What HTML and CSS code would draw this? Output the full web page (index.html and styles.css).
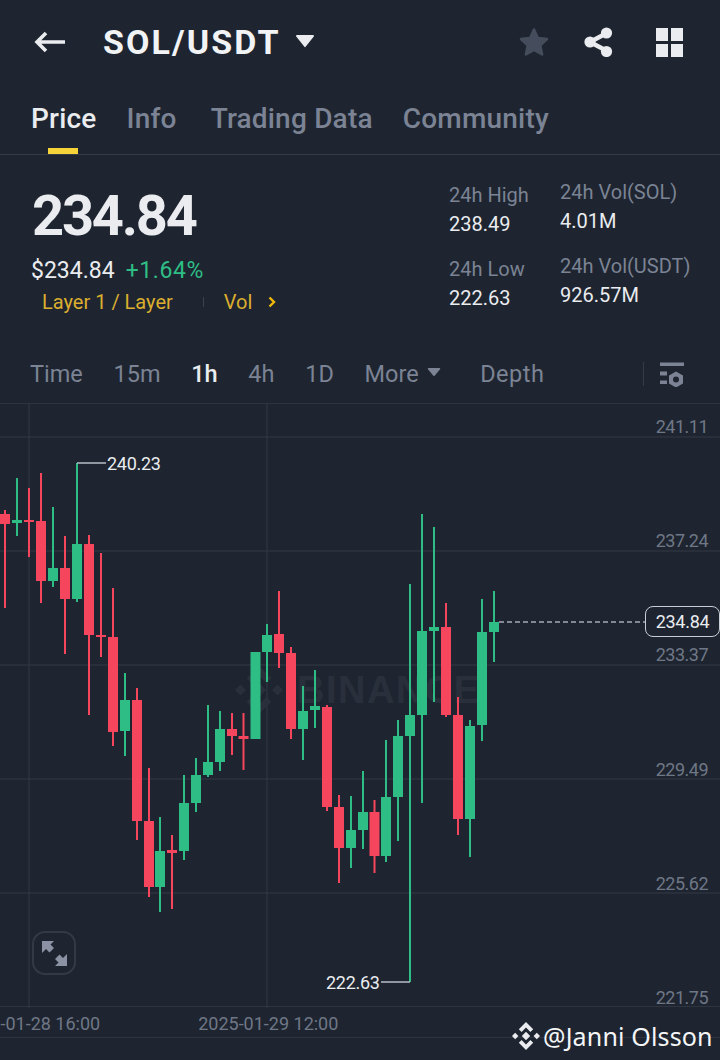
FILE: index.html
```html
<!DOCTYPE html>
<html lang="en">
<head>
<meta charset="utf-8">
<title>SOL/USDT</title>
<link rel="stylesheet" href="styles.css">
</head>
<body>
<main class="page">
  <header class="topbar">
    <svg class="ic-back" viewBox="0 0 32 24"><path d="M31 12H3M12 3l-9 9 9 9"/></svg>
    <h1 class="pair">SOL/USDT</h1>
    <svg class="ic-caret" viewBox="0 0 20 14"><path d="M2 1h16a1 1 0 0 1 .8 1.600l-8 10a1 1 0 0 1-1.600 0l-8-10A1 1 0 0 1 2 1z"/></svg>
    <div class="top-actions">
      <svg class="ic-star" viewBox="0 0 30 30"><path d="M15 2.500l3.900 8.500 9.100 1.100-6.700 6.300 1.800 9.100L15 23l-8.100 4.500 1.800-9.100L2 12.100 11.100 11z"/></svg>
      <svg class="ic-share" viewBox="0 0 30 30"><path class="ln" d="M22 6.500L6 15l16 8.500"/><circle cx="22.500" cy="6" r="5.600"/><circle cx="6" cy="15" r="5.600"/><circle cx="22.500" cy="24.500" r="5.600"/></svg>
      <div class="ic-grid"><i></i><i></i><i></i><i></i></div>
    </div>
  </header>

  <nav class="tabs">
    <a class="tab active">Price</a>
    <a class="tab">Info</a>
    <a class="tab tab-td">Trading Data</a>
    <a class="tab">Community</a>
  </nav>

  <section class="stats">
    <div class="stats-main">
      <div class="price">234.84</div>
      <div class="sub"><span class="fiat">$234.84</span><span class="chg">+1.64%</span></div>
      <div class="tags"><span>Layer 1 / Layer</span><i class="sep"></i><span>Vol</span>
        <svg class="ic-chev" viewBox="0 0 10 12"><path d="M2.500 1.500L7 6l-4.500 4.500"/></svg></div>
    </div>
    <div class="stats-col first">
      <div class="lbl">24h High</div><div class="val">238.49</div>
      <div class="lbl gap">24h Low</div><div class="val">222.63</div>
    </div>
    <div class="stats-col">
      <div class="lbl">24h Vol(SOL)</div><div class="val">4.01M</div>
      <div class="lbl gap">24h Vol(USDT)</div><div class="val">926.57M</div>
    </div>
  </section>

  <div class="intervals">
    <span class="iv i-time">Time</span>
    <span class="iv">15m</span>
    <span class="iv on">1h</span>
    <span class="iv">4h</span>
    <span class="iv">1D</span>
    <span class="iv">More</span>
    <svg class="ic-more" viewBox="0 0 14 10"><path d="M1.500 1h11a.8.8 0 0 1 .6 1.300l-5.500 6.500a.8.8 0 0 1-1.200 0L.9 2.300A.8.8 0 0 1 1.500 1z"/></svg>
    <span class="iv i-depth">Depth</span>
    <i class="iv-div"></i>
    <svg class="ic-set" viewBox="0 0 24 24"><path class="s1" d="M0 0h24v3.500H0zM0 9h7v4H0zM0 18h7v3.500H0z"/><path class="s2" d="M16 9l7 4v8l-7 4-7-4v-8z"/><circle class="s3" cx="16" cy="17" r="3"/></svg>
  </div>

  <div class="chart">
    <svg class="plot" viewBox="0 403 720 605">
      <path class="grid" d="M0 437H720M0 551H720M0 665H720M0 779H720M0 893H720M29 403V1008M267 403V1008"/>
      <g class="wm">
        <path transform="translate(235 666) scale(1.714)" d="M14 0l7.200 7.200-2.800 2.800L14 5.600 9.600 10 6.800 7.200zM14 28l-7.200-7.200 2.800-2.800 4.400 4.400 4.400-4.400 2.800 2.800zM0 14l3.200-3.200L6.400 14l-3.200 3.200zM21.600 14l3.200-3.200L28 14l-3.200 3.200zM14 9.800l4.200 4.200-4.200 4.200L9.800 14z"/>
        <text x="297" y="703">BINANCE</text>
      </g>
      <path class="wick up" d="M17 478V536M53 507V587M77 463V602M125 673V756M160 817V912M184 775V860M196 758V812M208 705V777M220 711V771M267 624V682M303 686V760M315 670V728M351 796V868M363 771V849M386 740V862M398 720V841M410 584V982M422 514V803M434 527V702M470 720V857M482 599V741M494 591V662"/>
      <path class="wick dn" d="M5 510V608M29 488V557M41 473V603M65 536V654M89 535V715M101 553V657M113 588V746M137 688V840M149 768V897M172 835V909M232 713V755M243.500 713V770M279 591V668M291 647V739M327 705V811M339 795V883M374.500 800V873M446 603V717M458 697V835"/>
      <path class="body up" d="M17 520V523M53 568V581M77 544V599M125 700V731M160 851V887M184 803V851M196 775V803M208 762V775M220 729V762M255.500 652V739M267 635V652M303 711V729M315 706V710M351 830V848M363 812V830M386 797V856M398 736V797M410 715V736M422 631V715M434 627V631M470 726V819M482 632V725M494 622V632"/>
      <path class="body dn" d="M5 514V524M29 520V522M41 521V581M65 568V599M89 544V635M101 635V637M113 637V732M137 700V821M149 821V887M172 850V853M232 729V736M243.500 736V739M279 634V653M291 653V729M327 707V807M339 807V848M374.500 812V856M446 627V715M458 715V819"/>
      <path class="lead" d="M77 463H106M381 982H410"/>
      <path class="dash" d="M499 622H645"/>
      <text class="mk" x="107" y="470">240.23</text>
      <text class="mk" x="326" y="989">222.63</text>
      <text class="ax" x="708" y="433">241.11</text>
      <text class="ax" x="708" y="547">237.24</text>
      <text class="ax" x="708" y="661">233.37</text>
      <text class="ax" x="708" y="776">229.49</text>
      <text class="ax" x="708" y="890">225.62</text>
      <text class="ax" x="708" y="1004">221.75</text>
    </svg>
    <div class="last">234.84</div>
    <button class="expand">
      <svg viewBox="0 0 25 25"><path d="M0 0h12L8.500 3.500 12 7l-4.500 4.500L4 8l-4 4zM25 25H13l3.500-3.500L13 18l4.500-4.500L21 17l4-4z"/></svg>
    </button>
  </div>

  <div class="xaxis">
    <span class="x1">2025-01-28 16:00</span>
    <span class="x2">2025-01-29 12:00</span>
  </div>

  <div class="credit">
    <svg class="logo" viewBox="0 0 28 28"><path d="M14 0l7.200 7.200-2.800 2.800L14 5.600 9.600 10 6.800 7.200zM14 28l-7.200-7.200 2.800-2.800 4.400 4.400 4.400-4.400 2.800 2.800zM0 14l3.200-3.200L6.400 14l-3.200 3.200zM21.600 14l3.200-3.200L28 14l-3.200 3.200zM14 9.800l4.200 4.200-4.200 4.200L9.800 14z"/></svg>
    <span>@Janni Olsson</span>
  </div>
</main>
</body>
</html>
```

FILE: styles.css
```css
* { box-sizing: border-box; }
html, body { margin: 0; padding: 0; }
body { background: #1e2530; color: #eaecef; font-family: Roboto, sans-serif; overflow: hidden; }
.page { position: relative; width: 720px; height: 1060px; overflow: hidden; }

/* top bar */
.topbar { display: flex; align-items: center; height: 84px; padding-left: 34px; }
.ic-back { width: 32px; height: 24px; fill: none; stroke: #eaecef; stroke-width: 3.600; }
.pair { margin: 0 0 0 37px; font-size: 34px; font-weight: 700; letter-spacing: 2.100px; line-height: 1; color: #f1f3f5; white-space: nowrap; }
.ic-caret { width: 20px; height: 14px; margin: -2px 0 0 14px; fill: #eaecef; }
.top-actions { display: flex; align-items: center; margin-left: auto; padding-right: 37px; }
.ic-star { width: 30px; height: 30px; fill: #454d5c; stroke: #454d5c; stroke-width: 2.500; stroke-linejoin: round; }
.ic-share { width: 30px; height: 30px; margin-left: 35px; fill: #eaecef; }
.ic-share .ln { fill: none; stroke: #eaecef; stroke-width: 4.500; }
.ic-grid { display: grid; grid-template-columns: 12px 12px; grid-auto-rows: 13px; gap: 3px; margin-left: 42px; }
.ic-grid i { background: #eaecef; }

/* tabs */
.tabs { display: flex; gap: 30px; height: 71px; padding: 15px 0 0 31px; border-bottom: 1px solid #363c47; }
.tab { position: relative; font-size: 28px; font-weight: 500; letter-spacing: 0.200px; line-height: 40px; color: #7b8394; }
.tab-td { margin-left: 4px; }
.tab.active { color: #eaecef; }
.tab.active::after { content: ""; position: absolute; left: 17px; top: 49px; width: 30px; height: 6px; background: #f6d339; }

/* stats */
.stats { display: flex; height: 194px; padding: 24px 0 0 32px; }
.stats-main { width: 417px; }
.price { font-size: 56px; font-weight: 700; line-height: 66px; letter-spacing: -2.200px; color: #eaecef; margin-top: 4px; }
.sub { display: flex; gap: 11px; margin: 9px 0 0 -1px; font-size: 23px; line-height: 26px; }
.fiat { color: #eaecef; }
.chg { color: #2ebd85; letter-spacing: 0.600px; }
.tags { display: flex; align-items: center; margin: 5px 0 0 10px; font-size: 20px; line-height: 26px; color: #dcae2f; }
.sep { width: 1px; height: 10px; margin: 0 20px 0 30px; background: #3c4350; }
.ic-chev { width: 10px; height: 12px; margin-left: 15px; fill: none; stroke: #f0b90b; stroke-width: 2.400; }
.stats-col { display: flex; flex-direction: column; width: 111px; margin-top: 0; }
.stats-col.first { margin-top: 3px; }
.lbl { font-size: 20px; line-height: 26px; color: #7b8394; white-space: nowrap; }
.lbl.gap { margin-top: 19px; }
.val { font-size: 20px; line-height: 26px; margin-top: 3px; color: #eaecef; white-space: nowrap; }

/* intervals */
.intervals { display: flex; align-items: center; height: 55px; padding: 0 0 4px 30px; border-bottom: 1px solid #2f3540; }
.iv { font-size: 23.500px; color: #7b8394; margin-right: 30.700px; }
.iv.on { color: #eaecef; font-weight: 500; }
.ic-more { width: 14px; height: 10px; margin: -4px 0 0 -22.200px; fill: #7b8394; }
.i-depth { margin: 0 0 0 39px; letter-spacing: 0.500px; }
.iv-div { width: 1px; height: 24px; margin-left: auto; background: #363c47; }
.ic-set { width: 24px; height: 25px; margin: 0 36px 0 16px; }
.ic-set .s1, .ic-set .s2 { fill: #7b8394; }
.ic-set .s3 { fill: #1e2530; }

/* chart */
.chart { position: relative; height: 604px; border-bottom: 1px solid #2f3540; }
.plot { display: block; width: 720px; height: 605px; margin-top: -1px; }
.grid { fill: none; stroke: #333944; stroke-width: 1; }
.wm path { fill: #2a303b; }
.wm text { font-family: "Liberation Sans", sans-serif; font-size: 38px; font-weight: 700; letter-spacing: 1.500px; fill: #2a303b; }
.wick { fill: none; stroke-width: 2; }
.body { fill: none; stroke-width: 10; }
.up { stroke: #2ebd85; }
.dn { stroke: #f6465d; }
.lead { fill: none; stroke: #b7bdc6; stroke-width: 1.500; }
.dash { fill: none; stroke: #a4abb5; stroke-width: 1.500; stroke-dasharray: 5 3; }
.mk { font-size: 18px; letter-spacing: -0.300px; fill: #eaecef; }
.ax { font-size: 18px; letter-spacing: -0.500px; fill: #6f7786; text-anchor: end; }
.last { position: absolute; left: 645px; top: 203px; width: 75px; height: 31px; border: 1.500px solid #c9ced6; border-radius: 8px; background: #1e2530; font-size: 18px; letter-spacing: -0.300px; line-height: 29px; text-align: center; color: #eaecef; }
.expand { position: absolute; left: 32px; top: 528px; width: 44px; height: 44px; padding: 0; display: flex; align-items: center; justify-content: center; background: none; border: 2px solid #333a45; border-radius: 13px; }
.expand svg { width: 25px; height: 25px; fill: #8a92a3; }

/* x axis */
.xaxis { display: flex; height: 31px; border-bottom: 1px solid #2f3540; font-size: 18px; line-height: 34px; color: #6f7786; white-space: nowrap; }
.x1 { margin-left: -40px; }
.x2 { margin-left: 98px; }

/* credit */
.credit { position: absolute; left: 512px; top: 1022px; display: flex; align-items: center; gap: 3px; font-family: "Noto Sans", sans-serif; font-size: 25px; letter-spacing: 0.150px; line-height: 28px; color: #f5f6f7; white-space: nowrap; }
.logo { width: 28px; height: 28px; fill: #eaecef; }
```
